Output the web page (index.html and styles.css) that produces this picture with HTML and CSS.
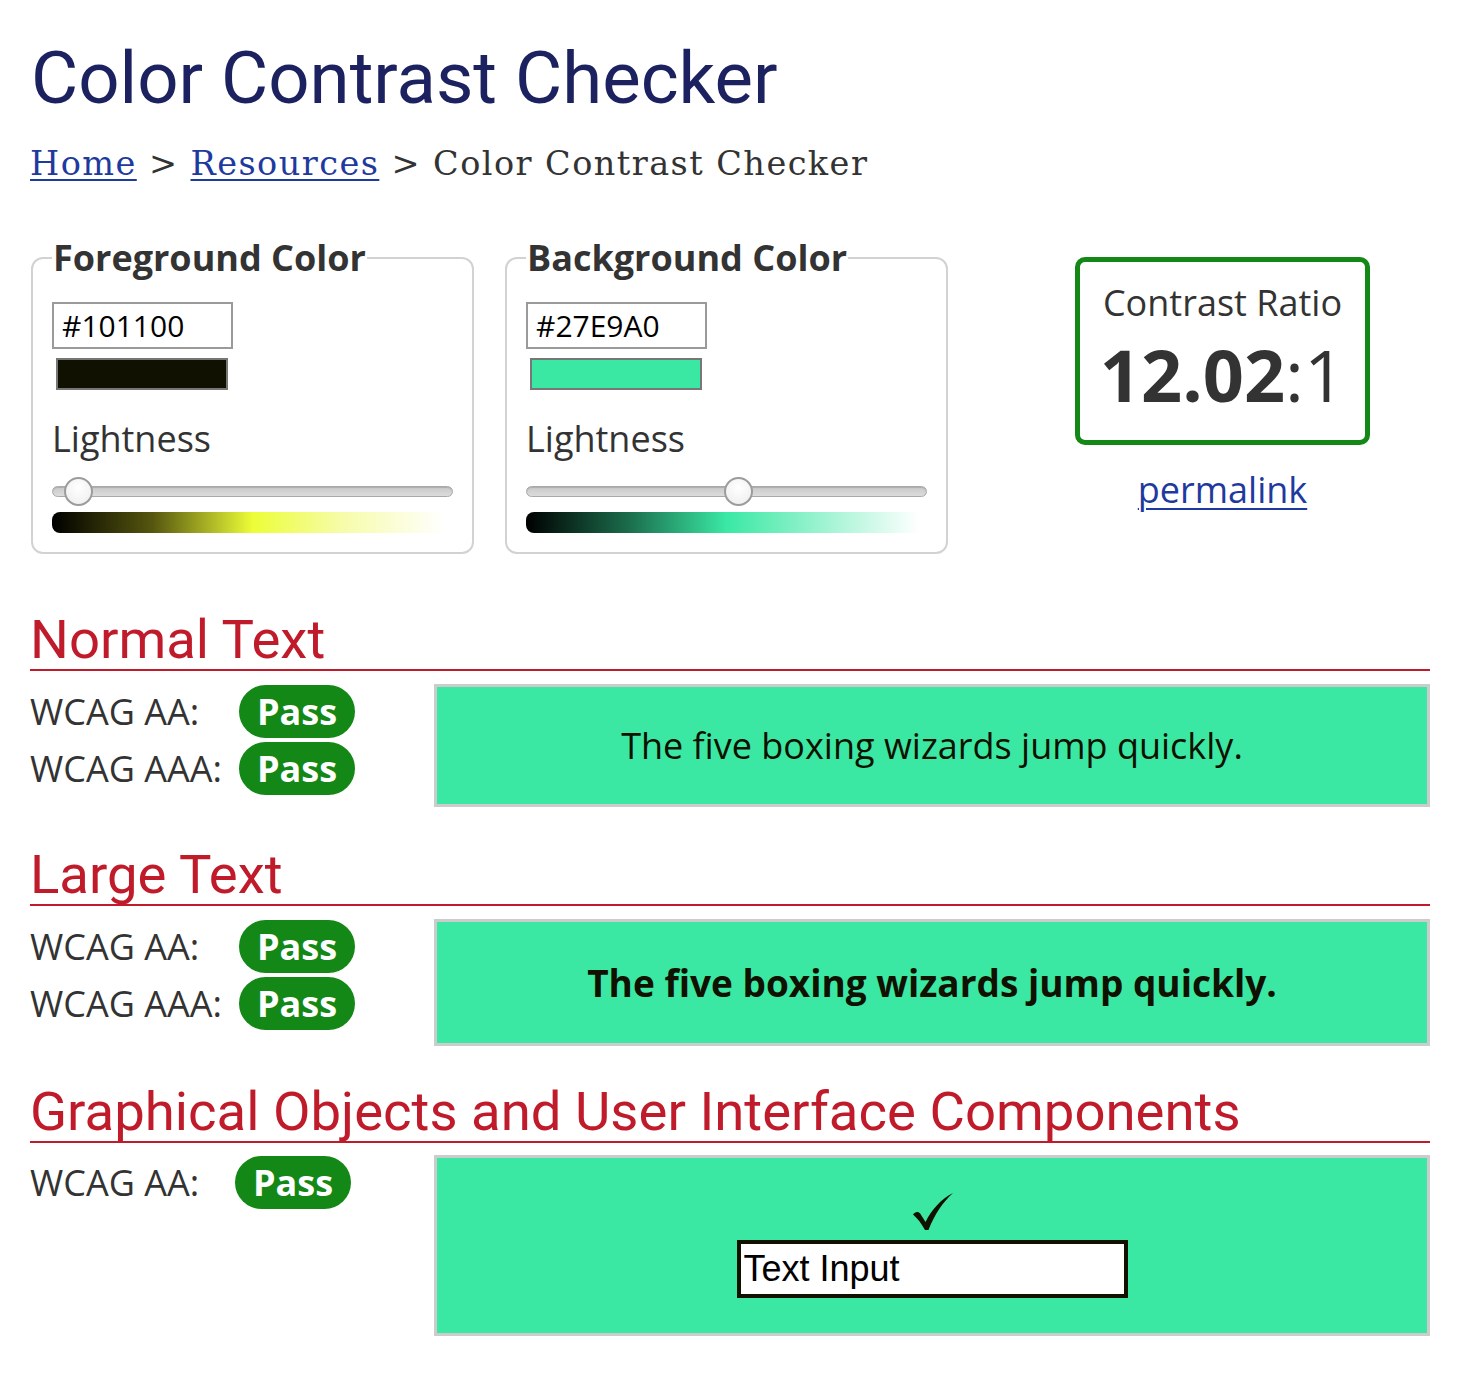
FILE: index.html
```html
<!DOCTYPE html>
<html lang="en">
<head>
<meta charset="utf-8">
<title>Color Contrast Checker</title>
<link rel="stylesheet" href="styles.css">
</head>
<body>
<main class="page">
  <h1 class="title">Color Contrast Checker</h1>
  <nav class="crumbs"><a href="#">Home</a> &gt; <a href="#">Resources</a> &gt; Color Contrast Checker</nav>

  <div class="pickers">
    <fieldset class="picker">
      <legend>Foreground Color</legend>
      <input class="hex" type="text" value="#101100">
      <div class="swatch swatch-fg"></div>
      <div class="light-label">Lightness</div>
      <div class="slider">
        <div class="track"></div>
        <div class="thumb" style="left: 6.5%"></div>
      </div>
      <div class="grad grad-fg"></div>
    </fieldset>

    <fieldset class="picker">
      <legend>Background Color</legend>
      <input class="hex" type="text" value="#27E9A0">
      <div class="swatch swatch-bg"></div>
      <div class="light-label">Lightness</div>
      <div class="slider">
        <div class="track"></div>
        <div class="thumb" style="left: 52.75%"></div>
      </div>
      <div class="grad grad-bg"></div>
    </fieldset>

    <div class="ratio-col">
      <div class="ratio-box">
        <div class="ratio-label">Contrast Ratio</div>
        <div class="ratio-value"><b>12.02</b>:1</div>
      </div>
      <a class="permalink" href="#">permalink</a>
    </div>
  </div>

  <section class="result">
    <h2>Normal Text</h2>
    <div class="result-row">
      <div class="checks">
        <div class="check"><span class="label">WCAG AA:</span><span class="pass">Pass</span></div>
        <div class="check"><span class="label">WCAG AAA:</span><span class="pass">Pass</span></div>
      </div>
      <div class="sample sample-normal">The five boxing wizards jump quickly.</div>
    </div>
  </section>

  <section class="result">
    <h2>Large Text</h2>
    <div class="result-row">
      <div class="checks">
        <div class="check"><span class="label">WCAG AA:</span><span class="pass">Pass</span></div>
        <div class="check"><span class="label">WCAG AAA:</span><span class="pass">Pass</span></div>
      </div>
      <div class="sample sample-large">The five boxing wizards jump quickly.</div>
    </div>
  </section>

  <section class="result result-ui">
    <h2>Graphical Objects and User Interface Components</h2>
    <div class="result-row">
      <div class="checks">
        <div class="check check-ui"><span class="label">WCAG AA:</span><span class="pass">Pass</span></div>
      </div>
      <div class="sample sample-ui">
        <svg class="tick" viewBox="0 0 40 37" width="40" height="37" aria-hidden="true">
          <path d="M0,21.5 C2,18.5 5.5,18 7.5,21 L12.5,29 C18.5,17 27.5,6.5 40,0 C30,9 21.5,21.5 15.5,37 L12,37 C8.5,30.5 4.5,25.5 0,21.5 Z" fill="#101100"/>
        </svg>
        <div class="text-input">Text Input</div>
      </div>
    </div>
  </section>
</main>
</body>
</html>
```

FILE: styles.css
```css
* { box-sizing: border-box; }

html, body {
  margin: 0;
  padding: 0;
  background: #ffffff;
}

body {
  font-family: "Open Sans", "Liberation Sans", sans-serif;
  font-size: 36px;
  color: #333333;
}

.page {
  width: 1400px;
  margin-left: 30px;
  padding-bottom: 30px;
}

.title {
  font-family: Roboto, "Liberation Sans", sans-serif;
  font-weight: 400;
  font-size: 72.5px;
  line-height: 86px;
  color: #1c2260;
  margin: 36px 0 0 1px;
}

.crumbs {
  font-family: "DejaVu Serif", "Liberation Serif", serif;
  font-size: 33.5px;
  line-height: 47px;
  color: #333333;
  margin-top: 18px;
  letter-spacing: 1.45px;
}

.crumbs a {
  color: #1f3a9e;
  text-decoration: underline;
  text-decoration-thickness: 2px;
  text-underline-offset: 4px;
}

/* ---------- pickers ---------- */

.pickers {
  display: flex;
  align-items: flex-start;
  margin-top: 48px;
}

.picker {
  flex: none;
  width: 443px;
  margin: 0 31px 0 1px;
  padding: 21px 19px 19px 19px;
  border: 2px solid #d2d2d2;
  border-radius: 12px;
  min-width: 0;
}

.picker + .picker {
  margin-left: 0;
}

.picker legend {
  font-weight: 700;
  font-size: 36px;
  line-height: 46px;
  color: #333333;
  padding: 0 1px;
}

.hex {
  display: block;
  width: 181px;
  height: 47px;
  border: 2px solid #9a9a9a;
  padding: 0 0 0 8px;
  margin: 0;
  font-family: "Open Sans", "Liberation Sans", sans-serif;
  font-size: 30px;
  color: #000000;
  background: #ffffff;
  outline: none;
}

.swatch {
  width: 172px;
  height: 32px;
  margin: 9px 0 0 4px;
  border: 2px solid #777777;
}

.swatch-fg { background: #101100; }
.swatch-bg { background: #3ae8a4; }

.light-label {
  margin-top: 24px;
  line-height: 50px;
  color: #333333;
}

.slider {
  position: relative;
  height: 30px;
  margin-top: 12px;
}

.track {
  position: absolute;
  left: 0;
  right: 0;
  top: 10px;
  height: 11px;
  border-radius: 6px;
  background: linear-gradient(#c9c9c9, #dcdcdc);
  border: 1px solid #a9a9a9;
  box-shadow: inset 0 1px 1px rgba(0,0,0,0.15);
}

.thumb {
  position: absolute;
  top: 1px;
  width: 29px;
  height: 29px;
  margin-left: -14px;
  border-radius: 50%;
  border: 2px solid #9c9c9c;
  background: radial-gradient(circle at 50% 35%, #ffffff, #ececec);
}

.grad {
  height: 21px;
  margin-top: 6px;
  border-radius: 8px 4px 4px 8px;
}

.grad-fg {
  background: linear-gradient(to right, #000000 0%, #55560e 25%, #ecfd37 50%, #f6fca8 72%, #ffffff 98%);
}

.grad-bg {
  background: linear-gradient(to right, #000000 0%, #1a6a4a 25%, #3ae8a4 50%, #a6f4d5 76%, #ffffff 98%);
}

/* ---------- ratio ---------- */

.ratio-col {
  flex: none;
  margin-left: 96px;
  display: flex;
  flex-direction: column;
  align-items: center;
  width: 295px;
  margin-top: 22px;
}

.ratio-box {
  width: 295px;
  height: 188px;
  border: 5px solid #138816;
  border-radius: 10px;
  padding-top: 17px;
  text-align: center;
}

.ratio-label {
  font-size: 36px;
  line-height: 47px;
  color: #333333;
}

.ratio-value {
  font-size: 72px;
  line-height: 72px;
  margin-top: 12px;
  color: #333333;
}

.ratio-value b {
  font-weight: 700;
}

.permalink {
  margin-top: 21px;
  font-size: 36px;
  line-height: 47px;
  color: #1f3a9e;
  text-decoration-thickness: 2px;
  text-underline-offset: 5px;
}

/* ---------- results ---------- */

.result {
  margin-top: 37px;
}

.pickers + .result {
  margin-top: 55px;
}

.result-ui {
  margin-top: 35px;
}

.result h2 {
  font-family: Roboto, "Liberation Sans", sans-serif;
  font-weight: 400;
  font-size: 54.5px;
  line-height: 60px;
  color: #c01b2b;
  margin: 0;
  padding-left: 0;
  border-bottom: 2px solid #c01b2b;
}

.result-row {
  display: flex;
  align-items: flex-start;
  margin-top: 13px;
}

.result-ui .result-row {
  margin-top: 12px;
}

.checks {
  width: 404px;
  flex: none;
  display: flex;
  flex-direction: column;
  gap: 4px;
  padding-top: 1px;
}

.check {
  display: flex;
  align-items: center;
}

.label {
  width: 209px;
  flex: none;
  padding-left: 0;
  color: #333333;
}

.check-ui .label {
  width: 205px;
}

.pass {
  display: inline-flex;
  align-items: center;
  justify-content: center;
  width: 116px;
  height: 53px;
  border-radius: 27px;
  background: #138816;
  color: #ffffff;
  font-weight: 700;
  font-size: 36px;
}

.sample {
  flex: 1;
  border: 3px solid #cccccc;
  background: #3ae8a4;
  color: #101100;
  display: flex;
  align-items: center;
  justify-content: center;
}

.sample-normal {
  height: 123px;
  font-size: 36px;
}

.sample-large {
  height: 127px;
  font-size: 37px;
  font-weight: 700;
}

.sample-ui {
  height: 181px;
  flex-direction: column;
}

.tick {
  display: block;
  width: 40px;
  height: 37px;
  margin-left: 2px;
}

.text-input {
  width: 391px;
  height: 58px;
  margin-top: 10px;
  border: 4px solid #101100;
  background: #ffffff;
  color: #000000;
  font-family: "Liberation Sans", Arial, sans-serif;
  font-size: 36px;
  line-height: 50px;
  padding-left: 3px;
}
```
